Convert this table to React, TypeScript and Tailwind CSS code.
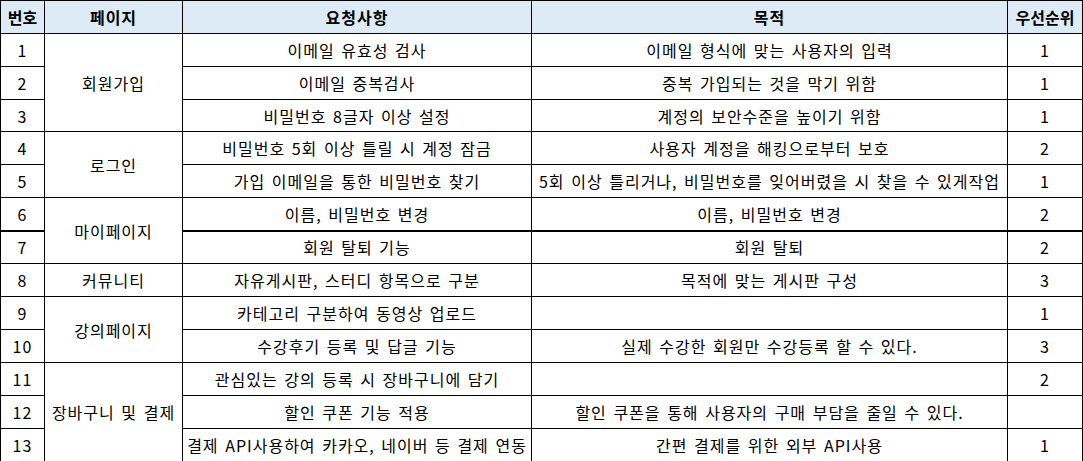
const rows = [
  { no: "1", page: "회원가입", span: 3, req: "이메일 유효성 검사", goal: "이메일 형식에 맞는 사용자의 입력", pri: "1" },
  { no: "2", req: "이메일 중복검사", goal: "중복 가입되는 것을 막기 위함", pri: "1" },
  { no: "3", req: "비밀번호 8글자 이상 설정", goal: "계정의 보안수준을 높이기 위함", pri: "1" },
  { no: "4", page: "로그인", span: 2, req: "비밀번호 5회 이상 틀릴 시 계정 잠금", goal: "사용자 계정을 해킹으로부터 보호", pri: "2" },
  { no: "5", req: "가입 이메일을 통한 비밀번호 찾기", goal: "5회 이상 틀리거나, 비밀번호를 잊어버렸을 시 찾을 수 있게작업", pri: "1" },
  { no: "6", page: "마이페이지", span: 2, req: "이름, 비밀번호 변경", goal: "이름, 비밀번호 변경", pri: "2", thick: true },
  { no: "7", req: "회원 탈퇴 기능", goal: "회원 탈퇴", pri: "2" },
  { no: "8", page: "커뮤니티", span: 1, req: "자유게시판, 스터디 항목으로 구분", goal: "목적에 맞는 게시판 구성", pri: "3" },
  { no: "9", page: "강의페이지", span: 2, req: "카테고리 구분하여 동영상 업로드", goal: "", pri: "1" },
  { no: "10", req: "수강후기 등록 및 답글 기능", goal: "실제 수강한 회원만 수강등록 할 수 있다.", pri: "3" },
  { no: "11", page: "장바구니 및 결제", span: 3, req: "관심있는 강의 등록 시 장바구니에 담기", goal: "", pri: "2" },
  { no: "12", req: "할인 쿠폰 기능 적용", goal: "할인 쿠폰을 통해 사용자의 구매 부담을 줄일 수 있다.", pri: "" },
  { no: "13", req: "결제 API사용하여 카카오, 네이버 등 결제 연동", goal: "간편 결제를 위한 외부 API사용", pri: "1" },
];

const cell = "border border-black text-center align-middle p-0 whitespace-nowrap";

export default function App() {
  return (
    <div className="bg-white w-[1083px] h-[461px] overflow-hidden">
      <table
        className="table-fixed border-collapse w-[1082px] text-[16px] tracking-[1px] [word-spacing:2px] text-black leading-none"
        style={{ fontFamily: '"Malgun Gothic", "Noto Sans CJK KR", sans-serif' }}
      >
        <colgroup>
          <col className="w-[44px]" />
          <col className="w-[138px]" />
          <col className="w-[349px]" />
          <col className="w-[476px]" />
          <col className="w-[75px]" />
        </colgroup>
        <thead>
          <tr className="h-[33px] bg-[#ddebf7] font-bold">
            <th className={`${cell} tracking-[0px]`}>번호</th>
            <th className={cell}>페이지</th>
            <th className={cell}>요청사항</th>
            <th className={cell}>목적</th>
            <th className={`${cell} tracking-[0px]`}>우선순위</th>
          </tr>
        </thead>
        <tbody>
          {rows.map((r, i) => (
            <tr key={r.no} className={i === 2 ? "h-[32px]" : "h-[33px]"}>
              <td className={`${cell} ${r.thick ? "border-b-2" : ""}`}>{r.no}</td>
              {r.page !== undefined && (
                <td className={cell} rowSpan={r.span}>
                  {r.page}
                </td>
              )}
              <td className={`${cell} ${r.thick ? "border-b-2" : ""}`}>{r.req}</td>
              <td className={`${cell} ${r.thick ? "border-b-2" : ""}`}>{r.goal}</td>
              <td className={`${cell} ${r.thick ? "border-b-2" : ""}`}>{r.pri}</td>
            </tr>
          ))}
        </tbody>
      </table>
    </div>
  );
}
